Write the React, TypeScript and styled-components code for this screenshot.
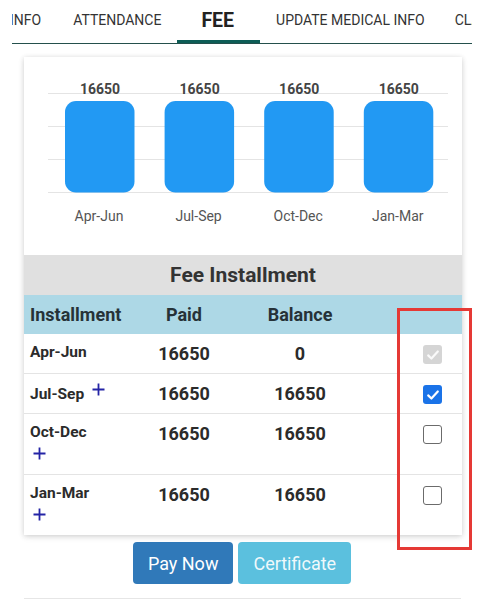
import React from "react";
import styled, { createGlobalStyle, css } from "styled-components";

const Global = createGlobalStyle`
  html, body { margin: 0; padding: 0; background: #fff; }
  body { font-family: Roboto, "Noto Sans", Arial, sans-serif; color: #333; }
  * { box-sizing: border-box; }
`;

const Page = styled.div`
  width: 484px;
  display: flex;
  flex-direction: column;
`;

const TabBar = styled.nav`
  margin: 0 12px;
  height: 44px;
  border-bottom: 1px solid #24504c;
  overflow: hidden;
`;

const TabStrip = styled.div`
  display: flex;
  margin-left: -18px;
  white-space: nowrap;
`;

const Tab = styled.div<{ $active?: boolean; $tight?: boolean }>`
  flex: none;
  height: 43px;
  padding: ${(p) => (p.$tight ? "0 14px 0 16px" : "0 16px")};
  display: flex;
  align-items: center;
  font-size: 14px;
  color: #333;
  text-transform: uppercase;
  border-bottom: 3px solid transparent;
  ${(p) =>
    p.$active &&
    css`
      padding: 0 26px 0 24px;
      font-size: 19.5px;
      font-weight: 700;
      color: #222;
      border-bottom-color: #0d5d56;
    `}
`;

const Card = styled.section`
  position: relative;
  margin: 13px 22px 0 24px;
  background: #fff;
  box-shadow: 0 1px 5px rgba(0, 0, 0, 0.16), 0 2px 8px rgba(0, 0, 0, 0.06);
`;

const ChartBox = styled.div`
  height: 198px;
  svg { display: block; }
`;

const TableTitle = styled.div`
  height: 40px;
  background: #e0e0e0;
  display: flex;
  align-items: center;
  justify-content: center;
  font-size: 21px;
  font-weight: 700;
  color: #333;
`;

const Grid = styled.div<{ $head?: boolean; $first?: boolean }>`
  display: grid;
  grid-template-columns: 100px 120px 112px 1fr;
  align-items: start;
  ${(p) =>
    p.$head
      ? css`
          height: 39px;
          align-items: center;
          background: #add8e6;
          color: #263238;
          font-size: 18px;
          font-weight: 700;
        `
      : css`
          padding: 9px 0 8px;
          border-top: ${p.$first ? "none" : "1px solid #e4e4e4"};
        `}
`;

const HeadCell = styled.div<{ $left?: boolean }>`
  text-align: ${(p) => (p.$left ? "left" : "center")};
  padding-left: ${(p) => (p.$left ? "6px" : "0")};
`;

const Label = styled.div`
  padding-left: 6px;
  font-size: 15.5px;
  line-height: 18px;
  font-weight: 700;
  color: #2b2b2b;
`;

const Value = styled.div`
  text-align: center;
  font-size: 18px;
  line-height: 22px;
  font-weight: 700;
  color: #2b2b2b;
`;

const PlusMark = styled.span<{ $block?: boolean }>`
  color: #2424a6;
  ${(p) =>
    p.$block
      ? css`
          display: flex;
          align-items: center;
          height: 25px;
          padding-left: 3px;
        `
      : css`
          display: inline-block;
          margin-left: 8px;
          vertical-align: 3px;
          svg { display: block; }
        `}
`;

const CheckCell = styled.div`
  display: flex;
  justify-content: flex-end;
  padding-right: 20px;
  padding-top: 2px;
`;

const Box = styled.span<{ $state: "disabled" | "checked" | "empty" }>`
  width: 19px;
  height: 19px;
  border-radius: 3px;
  display: flex;
  align-items: center;
  justify-content: center;
  ${(p) =>
    p.$state === "disabled"
      ? css`background: #d5d5d5;`
      : p.$state === "checked"
      ? css`background: #1a73e8;`
      : css`border: 1.5px solid #6b6b6b; background: #fff;`}
`;

const Highlight = styled.div`
  position: absolute;
  left: 373px;
  top: 251px;
  width: 75px;
  height: 242px;
  border: 3.5px solid #e53935;
  pointer-events: none;
`;

const Actions = styled.div`
  display: flex;
  justify-content: center;
  gap: 5px;
  margin-top: 7px;
`;

const Button = styled.button<{ $variant: "primary" | "info" }>`
  height: 42px;
  padding: 0 15px;
  border: none;
  border-radius: 4px;
  font-family: Roboto, Arial, sans-serif;
  font-size: 18px;
  color: #fff;
  background: ${(p) => (p.$variant === "primary" ? "#3079b9" : "#5bc0de")};
  ${(p) => p.$variant === "info" && css`color: rgba(255,255,255,0.92);`}
`;

const Divider = styled.div`
  margin: 14px 23px 0 24px;
  height: 1px;
  background: #e6e6e6;
`;

const Plus = () => (
  <svg width="13" height="13" viewBox="0 0 13 13">
    <path d="M6.5 0.5v12M0.5 6.5h12" stroke="currentColor" strokeWidth="1.8" fill="none" />
  </svg>
);

const Tick = ({ color }: { color: string }) => (
  <svg width="14" height="14" viewBox="0 0 14 14">
    <path d="M2.2 7.4l3.2 3.1 6.4-7" stroke={color} strokeWidth="2.2" fill="none" strokeLinecap="round" strokeLinejoin="round" />
  </svg>
);

const quarters = ["Apr-Jun", "Jul-Sep", "Oct-Dec", "Jan-Mar"];

const Chart = () => (
  <ChartBox>
    <svg width="438" height="198" viewBox="0 0 438 198">
      {[36.5, 69.5, 102.5, 135.5].map((y) => (
        <line key={y} x1="24" x2="424" y1={y} y2={y} stroke="#e4e4e4" strokeWidth="1" />
      ))}
      {quarters.map((q, i) => {
        const x = 41 + i * 99.6;
        return (
          <g key={q}>
            <rect x={x} y="44" width="69.5" height="91.5" rx="11" fill="#2299f3" />
            <text x={x + 35} y="37" textAnchor="middle" fontFamily="Roboto, Arial, sans-serif" fontSize="14" fontWeight="700" fill="#444">
              16650
            </text>
            <text x={x + 34} y="164" textAnchor="middle" fontFamily="Roboto, Arial, sans-serif" fontSize="14" fill="#555">
              {q}
            </text>
          </g>
        );
      })}
    </svg>
  </ChartBox>
);

type Row = { q: string; paid: string; bal: string; plus?: "inline" | "block"; state: "disabled" | "checked" | "empty" };
const rows: Row[] = [
  { q: "Apr-Jun", paid: "16650", bal: "0", state: "disabled" },
  { q: "Jul-Sep", paid: "16650", bal: "16650", plus: "inline", state: "checked" },
  { q: "Oct-Dec", paid: "16650", bal: "16650", plus: "block", state: "empty" },
  { q: "Jan-Mar", paid: "16650", bal: "16650", plus: "block", state: "empty" },
];

export default function App() {
  return (
    <Page>
      <Global />
      <TabBar>
        <TabStrip>
          <Tab>Info</Tab>
          <Tab>Attendance</Tab>
          <Tab $active>Fee</Tab>
          <Tab $tight>Update Medical Info</Tab>
          <Tab $tight>Class</Tab>
        </TabStrip>
      </TabBar>
      <Card>
        <Chart />
        <TableTitle>Fee Installment</TableTitle>
        <Grid $head>
          <HeadCell $left>Installment</HeadCell>
          <HeadCell>Paid</HeadCell>
          <HeadCell>Balance</HeadCell>
          <HeadCell />
        </Grid>
        {rows.map((r, i) => (
          <Grid key={r.q} $first={i === 0}>
            <Label>
              {r.q}
              {r.plus === "inline" && (
                <PlusMark>
                  <Plus />
                </PlusMark>
              )}
              {r.plus === "block" && (
                <PlusMark $block>
                  <Plus />
                </PlusMark>
              )}
            </Label>
            <Value>{r.paid}</Value>
            <Value>{r.bal}</Value>
            <CheckCell>
              <Box $state={r.state}>
                {r.state === "disabled" && <Tick color="#fafafa" />}
                {r.state === "checked" && <Tick color="#fff" />}
              </Box>
            </CheckCell>
          </Grid>
        ))}
        <Highlight />
      </Card>
      <Actions>
        <Button $variant="primary">Pay Now</Button>
        <Button $variant="info">Certificate</Button>
      </Actions>
      <Divider />
    </Page>
  );
}
